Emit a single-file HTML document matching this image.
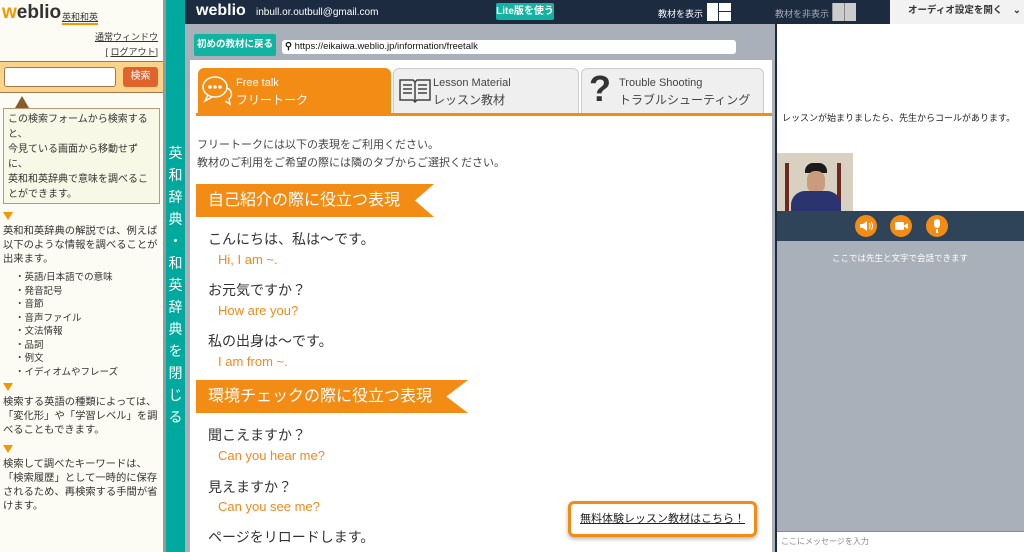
<!DOCTYPE html>
<html><head><meta charset="utf-8"><style>
*{margin:0;padding:0;box-sizing:border-box}
body{width:1024px;height:552px;overflow:hidden;position:relative;font-family:"Liberation Sans","Noto Sans CJK JP",sans-serif;background:#fff}
.a{position:absolute}
.l{left:0;top:0;width:163px;height:552px;background:#fcfcf4;font-size:10px;color:#333}
.tri{display:inline-block;width:0;height:0;border-left:5px solid transparent;border-right:5px solid transparent;border-top:8px solid #f39800}
.band{background:#f28c14;color:#fff;font-size:16px;height:33px;line-height:33px;padding-left:12px}
.jp{font-size:14px;color:#333}
.en{font-size:13px;color:#f08a1c}
</style></head><body>
<div class="a l">
 <div class="a" style="left:2px;top:2px;font-size:19px;font-weight:bold;color:#333"><span style="color:#f39800">w</span>eblio</div>
 <div class="a" style="left:62px;top:10px;font-size:9px;text-decoration:underline;border-bottom:2px solid #f39800">英和和英</div>
 <div class="a" style="right:5px;top:30px;font-size:9px;text-decoration:underline">通常ウィンドウ</div>
 <div class="a" style="right:5px;top:45px;font-size:9px">[ <u>ログアウト</u>]</div>
 <div class="a" style="left:0;top:61px;width:163px;height:32px;background:#fbd38a;border-top:1px solid #a0784a;border-bottom:1px solid #a0784a"></div>
 <div class="a" style="left:4px;top:67px;width:112px;height:20px;background:#fff;border:1px solid #a0784a;border-radius:3px"></div>
 <div class="a" style="left:123px;top:67px;width:35px;height:20px;background:#e0632c;border-radius:3px;color:#fff;font-size:10px;text-align:center;line-height:20px">検索</div>
 <div class="a" style="left:15px;top:96px;width:0;height:0;border-left:7px solid transparent;border-right:7px solid transparent;border-bottom:12px solid #8b5a2b"></div>
 <div class="a" style="left:3px;top:108px;width:157px;height:96px;background:#f8f8e6;border:1px solid #b89a7a;padding:3px 4px;line-height:15px;font-size:10px">この検索フォームから検索すると、<br>今見ている画面から移動せずに、<br>英和和英辞典で意味を調べることができます。</div>
 <div class="a" style="left:3px;top:211px;width:156px;line-height:14px;font-size:10.3px">
  <span class="tri"></span><br>英和和英辞典の解説では、例えば以下のような情報を調べることが出来ます。
  <div style="padding-left:12px;margin-top:4px;font-size:9.5px;line-height:13.5px">・英語/日本語での意味<br>・発音記号<br>・音節<br>・音声ファイル<br>・文法情報<br>・品詞<br>・例文<br>・イディオムやフレーズ</div>
  <div style="margin-top:3px"><span class="tri"></span><br>検索する英語の種類によっては、「変化形」や「学習レベル」を調べることもできます。</div>
  <div style="margin-top:6px"><span class="tri"></span><br>検索して調べたキーワードは、「検索履歴」として一時的に保存されるため、再検索する手間が省けます。</div>
 </div>
</div>
<div class="a" style="left:163px;top:0;width:3px;height:552px;background:#999"></div>
<div class="a" style="left:166px;top:0;width:19px;height:552px;background:#00a99d;color:#fff;font-size:14px;text-align:center;line-height:22px;padding-top:142px">英<br>和<br>辞<br>典<br>・<br>和<br>英<br>辞<br>典<br>を<br>閉<br>じ<br>る</div>
<div class="a" style="left:185px;top:0;width:705px;height:24px;background:#1c2b40"></div>
<div class="a" style="left:196px;top:2px;font-size:16px;font-weight:bold;color:#fff">weblio</div>
<div class="a" style="left:256px;top:7px;font-size:10px;color:#fff">inbull.or.outbull@gmail.com</div>
<div class="a" style="left:496px;top:3px;width:58px;height:17px;background:#12b3a1;color:#fff;font-size:10px;font-weight:bold;text-align:center;line-height:17px;border-radius:2px">Lite版を使う</div>
<div class="a" style="left:658px;top:7px;font-size:9px;color:#fff">教材を表示</div>
<div class="a" style="left:707px;top:3px;width:24px;height:18px;background:#fff;border-left:11px solid #fff"><div style="position:absolute;left:0;top:0;width:1px;height:18px;background:#1c2b40"></div><div style="position:absolute;left:1px;top:8px;width:12px;height:1px;background:#1c2b40"></div></div>
<div class="a" style="left:775px;top:7px;font-size:9px;color:#aab">教材を非表示</div>
<div class="a" style="left:832px;top:3px;width:24px;height:18px;background:#ccc;border-left:1px solid #999"><div style="position:absolute;left:11px;top:0;width:1px;height:18px;background:#888"></div></div>
<div class="a" style="left:890px;top:0;width:134px;height:24px;background:#f2f2f2;font-size:9.5px;color:#333;line-height:22px;padding-left:18px;font-weight:bold">オーディオ設定を開く&nbsp;&nbsp;&nbsp;&nbsp;⌄</div>
<div class="a" style="left:185px;top:24px;width:590px;height:528px;background:#aab0b9"></div>
<div class="a" style="left:194px;top:34px;width:82px;height:22px;background:#12b3a1;color:#fff;font-size:9.5px;font-weight:bold;text-align:center;line-height:22px;border-radius:2px">初めの教材に戻る</div>
<div class="a" style="left:282px;top:40px;width:454px;height:14px;background:#fff;border-radius:3px;font-size:9.5px;line-height:14px;padding-left:3px;color:#111"><b>⚲</b> https://eikaiwa.weblio.jp/information/freetalk</div>
<div class="a" style="left:190px;top:60px;width:582px;height:492px;background:#fff"></div>
<div class="a" style="left:198px;top:68px;width:193px;height:46px;background:#f28c14;border-radius:6px 6px 0 0"></div>
<svg class="a" style="left:200px;top:74px" width="36" height="34" viewBox="0 0 36 34" fill="none" stroke="#fff" stroke-width="1.5"><ellipse cx="15" cy="13" rx="12" ry="10"/><path d="M8 21l-3 6 7-4"/><path d="M27 14c5 2 6 8 2 11l1 5-5-3"/><circle cx="10" cy="13" r="1" fill="#fff"/><circle cx="15" cy="13" r="1" fill="#fff"/><circle cx="20" cy="13" r="1" fill="#fff"/></svg>
<div class="a" style="left:236px;top:75px;color:#fff;font-size:11px;line-height:17px">Free talk<br><span style="font-size:12px">フリートーク</span></div>
<div class="a" style="left:393px;top:68px;width:186px;height:46px;background:#efefef;border:1px solid #ccc;border-radius:6px 6px 0 0"></div>
<svg class="a" style="left:398px;top:77px" width="34" height="26" viewBox="0 0 34 26" fill="none" stroke="#444" stroke-width="1.5"><path d="M2 3h13l2 2 2-2h13v20H19l-2 2-2-2H2z"/><path d="M17 5v20M5 8h9M5 12h9M5 16h9M20 8h9M20 12h9M20 16h9"/></svg>
<div class="a" style="left:433px;top:75px;color:#444;font-size:11px;line-height:17px">Lesson Material<br><span style="font-size:12px">レッスン教材</span></div>
<div class="a" style="left:581px;top:68px;width:183px;height:46px;background:#efefef;border:1px solid #ccc;border-radius:6px 6px 0 0"></div>
<div class="a" style="left:589px;top:68px;font-size:36px;font-weight:bold;color:#333">?</div>
<div class="a" style="left:619px;top:75px;color:#444;font-size:11px;line-height:17px">Trouble Shooting<br><span style="font-size:12px">トラブルシューティング</span></div>
<div class="a" style="left:196px;top:113px;width:576px;height:3px;background:#f28c14"></div>
<div class="a" style="left:197px;top:136px;font-size:11px;color:#444;line-height:18px">フリートークには以下の表現をご利用ください。<br>教材のご利用をご希望の際には隣のタブからご選択ください。</div>
<div class="a band" style="left:196px;top:184px;width:238px;clip-path:polygon(0 0,100% 0,92% 50%,100% 100%,0 100%)">自己紹介の際に役立つ表現</div>
<div class="a jp" style="left:208px;top:229px">こんにちは、私は〜です。</div>
<div class="a en" style="left:218px;top:252px">Hi, I am ~.</div>
<div class="a jp" style="left:208px;top:280px">お元気ですか？</div>
<div class="a en" style="left:218px;top:303px">How are you?</div>
<div class="a jp" style="left:208px;top:331px">私の出身は〜です。</div>
<div class="a en" style="left:218px;top:354px">I am from ~.</div>
<div class="a band" style="left:196px;top:380px;width:272px;clip-path:polygon(0 0,100% 0,92% 50%,100% 100%,0 100%)">環境チェックの際に役立つ表現</div>
<div class="a jp" style="left:208px;top:425px">聞こえますか？</div>
<div class="a en" style="left:218px;top:448px">Can you hear me?</div>
<div class="a jp" style="left:208px;top:477px">見えますか？</div>
<div class="a en" style="left:218px;top:499px">Can you see me?</div>
<div class="a jp" style="left:208px;top:527px">ページをリロードします。</div>
<div class="a" style="left:568px;top:501px;width:189px;height:36px;background:#fff;border:3px solid #f28c14;border-radius:6px;box-shadow:0 2px 4px rgba(0,0,0,.3);font-size:11px;color:#222;text-decoration:underline;text-align:center;line-height:30px">無料体験レッスン教材はこちら！</div>
<div class="a" style="left:775px;top:24px;width:2px;height:528px;background:#1c2b40"></div>
<div class="a" style="left:777px;top:24px;width:247px;height:187px;background:#fff"></div>
<div class="a" style="left:782px;top:111px;font-size:9px;color:#222;white-space:nowrap">レッスンが始まりましたら、先生からコールがあります。</div>
<div class="a" style="left:777px;top:153px;width:76px;height:58px;background:#d8d0c0;overflow:hidden">
 <div class="a" style="left:8px;top:10px;width:4px;height:48px;background:#6b2a20"></div><div class="a" style="left:60px;top:10px;width:4px;height:48px;background:#6b2a20"></div>
 <div class="a" style="left:28px;top:10px;width:22px;height:10px;background:#1a1a1a;border-radius:8px 8px 0 0"></div>
 <div class="a" style="left:30px;top:18px;width:18px;height:22px;background:#c89c7c;border-radius:8px"></div>
 <div class="a" style="left:14px;top:38px;width:50px;height:24px;background:#2c3470;border-radius:14px 14px 0 0"></div>
</div>
<div class="a" style="left:777px;top:211px;width:247px;height:30px;background:#2f4459"></div>
<svg class="a" style="left:855px;top:215px" width="22" height="22" viewBox="0 0 22 22"><circle cx="11" cy="11" r="11" fill="#f28c14"/><path d="M5 9h3l4-3v10l-4-3H5z" fill="#fff"/><path d="M14 8c1.5 2 1.5 4 0 6M16 7c2 2.5 2 5.5 0 8" stroke="#fff" stroke-width="1" fill="none"/></svg>
<div class="a" style="left:890px;top:215px;width:22px;height:22px;border-radius:50%;background:#f28c14"><div class="a" style="left:5px;top:7px;width:9px;height:8px;background:#fff;border-radius:1px"></div><div class="a" style="left:13px;top:8px;border-right:5px solid #fff;border-top:3px solid transparent;border-bottom:3px solid transparent"></div></div>
<div class="a" style="left:926px;top:215px;width:22px;height:22px;border-radius:50%;background:#f28c14"><div class="a" style="left:8px;top:4px;width:6px;height:9px;background:#fff;border-radius:3px"></div><div class="a" style="left:10px;top:14px;width:2px;height:4px;background:#fff"></div></div>
<div class="a" style="left:777px;top:241px;width:247px;height:290px;background:#a9b0b9"></div>
<div class="a" style="left:832px;top:252px;font-size:8.5px;color:#fff">ここでは先生と文字で会話できます</div>
<div class="a" style="left:777px;top:531px;width:247px;height:21px;background:#fff;border-top:1px solid #889"></div>
<div class="a" style="left:781px;top:536px;font-size:8px;color:#888">ここにメッセージを入力</div>
</body></html>
